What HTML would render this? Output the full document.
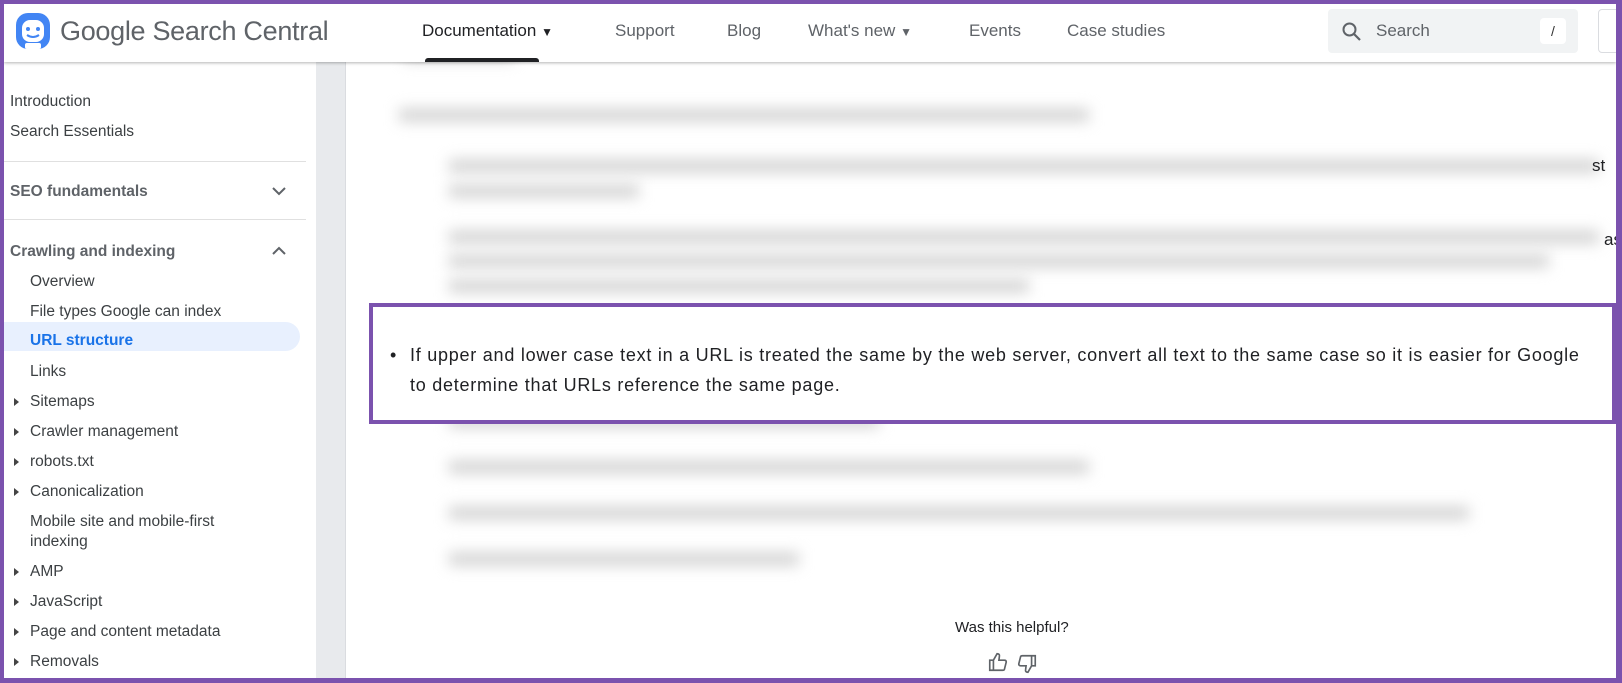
<!DOCTYPE html>
<html><head><meta charset="utf-8"><style>
*{margin:0;padding:0;box-sizing:border-box}
body{width:1622px;height:683px;overflow:hidden;background:#7b52ae;font-family:"Liberation Sans",Arial,sans-serif;position:relative}
#frame{position:absolute;left:4px;top:4px;right:6px;bottom:5px;background:#fff;overflow:hidden}
.hdr{position:absolute;left:0;top:0;right:0;height:58px;background:#fff;box-shadow:0 1px 3px rgba(0,0,0,.3);z-index:3}
.nav{position:absolute;top:17px;font-size:17px;color:#5f6368}
.side{position:absolute;left:0;top:58px;width:312px;bottom:0;background:#fff}
.gut{position:absolute;left:312px;top:58px;width:30px;bottom:0;background:#e8eaed;border-right:1px solid #dadce0}
.it{position:absolute;font-size:15.5px;color:#3c4043;left:26px}
.tri{position:absolute;left:10px;width:0;height:0;border-left:5px solid #444;border-top:4px solid transparent;border-bottom:4px solid transparent}
.b{position:absolute;background:#d6d6d6;filter:blur(7px);height:14px}
</style></head><body><div id="frame">
<div class="hdr">
 <svg style="position:absolute;left:9px;top:6px" width="40" height="44" viewBox="0 0 40 44"><rect x="3" y="3" width="34" height="36" rx="12" fill="#4285f4"/><rect x="9" y="10" width="22" height="22" rx="8" fill="#fff"/><circle cx="15" cy="19" r="2" fill="#4285f4"/><circle cx="25" cy="19" r="2" fill="#4285f4"/><path d="M14 25q6 4 12 0" stroke="#4285f4" stroke-width="2" fill="none"/><rect x="12" y="33" width="16" height="6" rx="2" fill="#fff"/></svg>
 <div style="position:absolute;left:56px;top:12px;font-size:27px;color:#5f6368;letter-spacing:-.3px"><b style="font-weight:500">Google</b> Search Central</div>
 <div class="nav" style="left:418px;color:#202124;font-weight:500">Documentation <span style="font-size:12px">▼</span></div>
 <div style="position:absolute;left:421px;top:54px;width:114px;height:4px;background:#202124;border-radius:3px 3px 0 0"></div>
 <div class="nav" style="left:611px">Support</div>
 <div class="nav" style="left:723px">Blog</div>
 <div class="nav" style="left:804px">What's new <span style="font-size:12px">▼</span></div>
 <div class="nav" style="left:965px">Events</div>
 <div class="nav" style="left:1063px">Case studies</div>
 <div style="position:absolute;left:1324px;top:5px;width:250px;height:44px;background:#f1f3f4;border-radius:4px">
  <svg style="position:absolute;left:12px;top:11px" width="24" height="24" viewBox="0 0 24 24"><circle cx="9.5" cy="9.5" r="6" stroke="#5f6368" stroke-width="2" fill="none"/><path d="M14 14l6 6" stroke="#5f6368" stroke-width="2.2"/></svg>
  <span style="position:absolute;left:48px;top:12px;font-size:17px;color:#5f6368">Search</span>
  <span style="position:absolute;right:12px;top:9px;width:26px;height:26px;background:#fff;border-radius:4px;text-align:center;font-size:14px;line-height:26px;color:#333">/</span>
 </div>
 <div style="position:absolute;left:1594px;top:5px;width:40px;height:44px;border:1px solid #dadce0;border-radius:4px"></div>
</div>
<div class="side">
 <div class="it" style="left:6px;top:31px">Introduction</div>
 <div class="it" style="left:6px;top:61px">Search Essentials</div>
 <div style="position:absolute;left:0;top:99px;width:302px;height:1px;background:#e0e0e0"></div>
 <div class="it" style="left:6px;top:121px;font-weight:bold;color:#5f6368">SEO fundamentals</div>
 <svg style="position:absolute;left:267px;top:123px" width="16" height="12"><path d="M2 3l6 6 6-6" stroke="#5f6368" stroke-width="2" fill="none"/></svg>
 <div style="position:absolute;left:0;top:157px;width:302px;height:1px;background:#e0e0e0"></div>
 <div class="it" style="left:6px;top:181px;font-weight:bold;color:#5f6368">Crawling and indexing</div>
 <svg style="position:absolute;left:267px;top:183px" width="16" height="12"><path d="M2 9l6-6 6 6" stroke="#5f6368" stroke-width="2" fill="none"/></svg>
 <div class="it" style="top:211px">Overview</div>
 <div class="it" style="top:241px">File types Google can index</div>
 <div style="position:absolute;left:0;top:260px;width:296px;height:29px;background:#e8f0fe;border-radius:0 15px 15px 0"></div>
 <div class="it" style="top:270px;color:#1a73e8;font-weight:bold">URL structure</div>
 <div class="it" style="top:301px">Links</div>
 <div class="tri" style="top:336px"></div><div class="it" style="top:331px">Sitemaps</div>
 <div class="tri" style="top:366px"></div><div class="it" style="top:361px">Crawler management</div>
 <div class="tri" style="top:396px"></div><div class="it" style="top:391px">robots.txt</div>
 <div class="tri" style="top:426px"></div><div class="it" style="top:421px">Canonicalization</div>
 <div class="it" style="top:450px;line-height:20px">Mobile site and mobile-first<br>indexing</div>
 <div class="tri" style="top:506px"></div><div class="it" style="top:501px">AMP</div>
 <div class="tri" style="top:536px"></div><div class="it" style="top:531px">JavaScript</div>
 <div class="tri" style="top:566px"></div><div class="it" style="top:561px">Page and content metadata</div>
 <div class="tri" style="top:596px"></div><div class="it" style="top:591px">Removals</div>
</div>
<div class="gut"></div>
<div class="b" style="left:400px;top:47px;width:110px;height:10px"></div>
<div class="b" style="left:395px;top:104px;width:690px"></div>
<div class="b" style="left:445px;top:155px;width:1150px"></div>
<div class="b" style="left:445px;top:180px;width:190px"></div>
<div class="b" style="left:445px;top:226px;width:1150px"></div>
<div class="b" style="left:445px;top:250px;width:1100px"></div>
<div class="b" style="left:445px;top:275px;width:580px"></div>
<div class="b" style="left:445px;top:410px;width:430px"></div>
<div class="b" style="left:445px;top:456px;width:640px"></div>
<div class="b" style="left:445px;top:502px;width:1020px"></div>
<div class="b" style="left:445px;top:548px;width:350px"></div>
<div style="position:absolute;left:1588px;top:152px;font-size:17px;color:#202124">st</div>
<div style="position:absolute;left:1600px;top:226px;font-size:17px;color:#202124">as</div>
<div style="position:absolute;left:365px;top:299px;width:1247px;height:121px;border:4px solid #7b52ae;background:#fff">
 <div style="position:absolute;left:15px;top:33px;font-size:18px;line-height:30px;color:#202124;padding-left:22px;width:1205px;letter-spacing:0.75px">
  <span style="position:absolute;left:2px;top:0">•</span>If upper and lower case text in a URL is treated the same by the web server, convert all text to the same case so it is easier for Google to determine that URLs reference the same page.
 </div>
</div>
<div style="position:absolute;left:951px;top:615px;font-size:15px;color:#202124">Was this helpful?</div>
<svg style="position:absolute;left:983px;top:647px" width="22" height="22" viewBox="0 0 24 24"><path d="M3 10h4v11H3zM7 10l4-7c2 0 3 1 2.5 3L13 10h6c1.5 0 2 1 2 2l-2 8c-.3 1-1 1-2 1H7" stroke="#5f6368" stroke-width="1.8" fill="none"/></svg>
<svg style="position:absolute;left:1012px;top:649px" width="22" height="22" viewBox="0 0 24 24"><path d="M21 14h-4V3h4zM17 14l-4 7c-2 0-3-1-2.5-3L11 14H5c-1.5 0-2-1-2-2l2-8c.3-1 1-1 2-1h10" stroke="#5f6368" stroke-width="1.8" fill="none"/></svg>
</div></body></html>
